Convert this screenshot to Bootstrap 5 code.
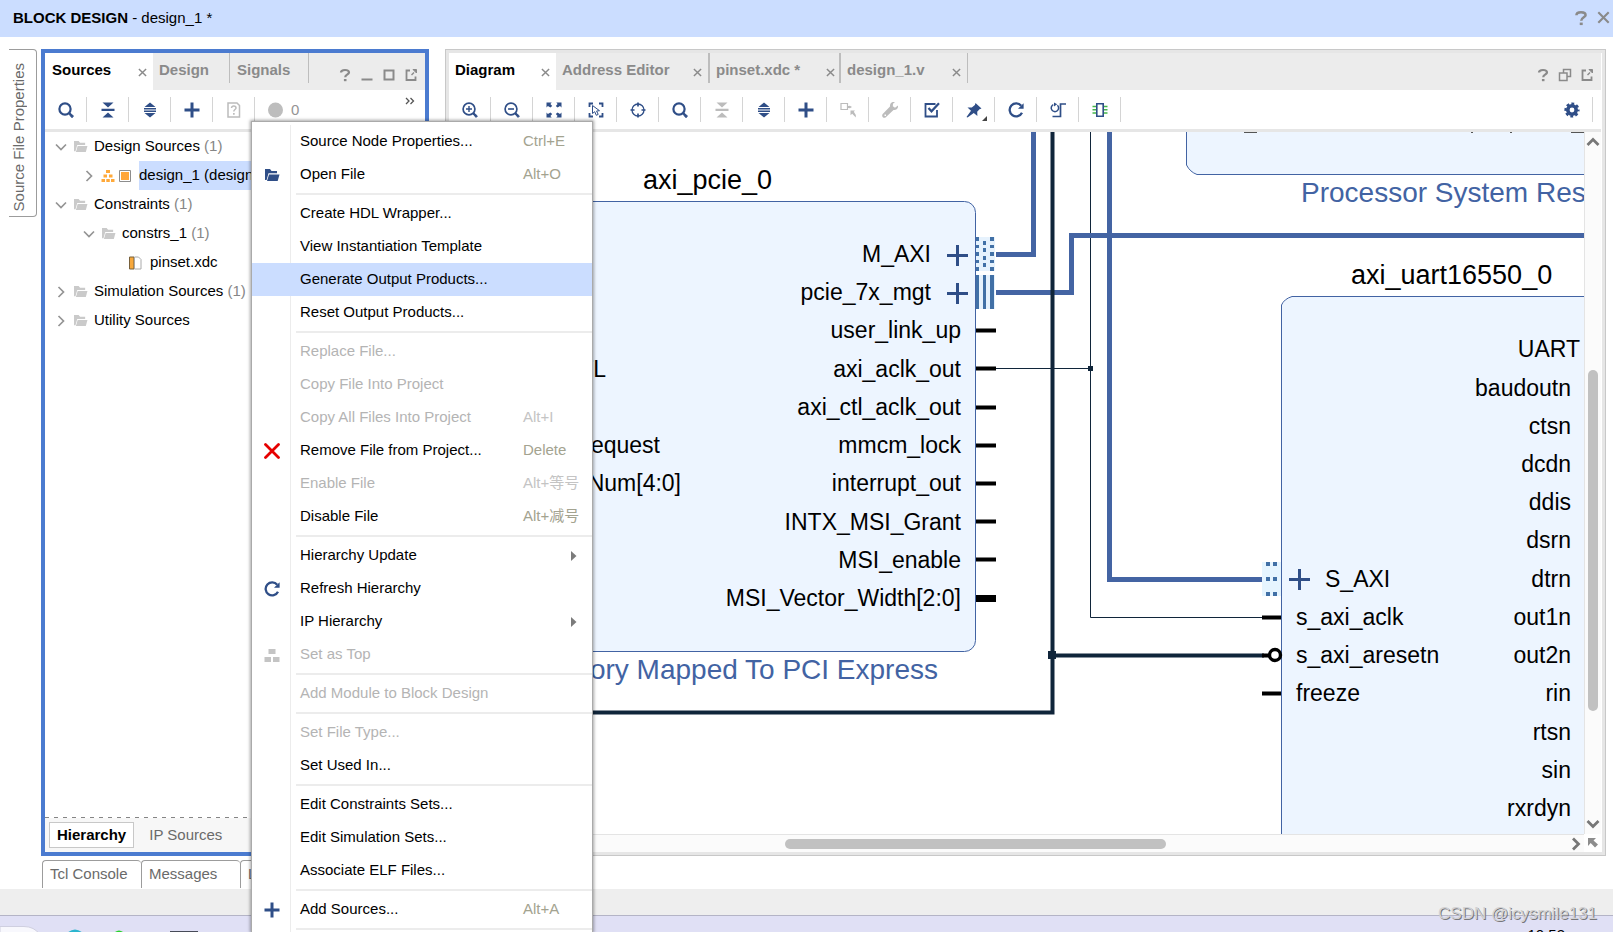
<!DOCTYPE html>
<html lang="en">
<head>
<meta charset="utf-8">
<meta name="viewport" content="width=device-width, initial-scale=1">
<title>Block Design - design_1</title>
<link rel="stylesheet" href="https://cdn.jsdelivr.net/npm/bootstrap@5.3.0/dist/css/bootstrap.min.css">
<script src="https://cdn.jsdelivr.net/npm/bootstrap@5.3.0/dist/js/bootstrap.bundle.min.js"></script>
<style>
:root { --navy:#2f4e87; --sel:#cbddff; --grey:#8a8a8a; --bar:#ececec; --ring:#e6e6e6; }
body { font:15px/20px "Liberation Sans", Arial, "Noto Sans CJK SC", sans-serif; color:#000; background:#fff; height:100vh; overflow:hidden; }
button { font:inherit; background:none; border:0; padding:0; color:inherit; }
svg { display:block; }
.title-strip { background:var(--sel); height:37px; padding:0 3px 2px 13px; color:#000; }
.title-strip button, .pane-ctl button { color:var(--grey); }
.workspace { padding:12px 7px 0 9px; min-height:0; }
.side-tab { width:28px; height:168px; margin-right:4px; border:1px solid #9c9c9c; border-left:0; border-radius:0 4px 4px 0; color:#6a6a6a; padding:8px 8px 0 0; }
.side-tab span { writing-mode:vertical-rl; transform:rotate(180deg); }
.pane-sources { flex:0 0 388px; border:4px solid #4b7bd0; margin-right:16px; }
.pane-diagram { border:1px solid #c8c8c8; min-width:0; }
.pane-ring { border:3px solid var(--ring); padding-right:1px; min-width:0; }
.tab-strip { background:var(--bar); height:37px; font-weight:bold; color:var(--grey); }
.doc-tab { height:30px; padding:0 6px; display:flex; align-items:center; border-right:1px solid #bdbdbd; }
.doc-tab.wide { border-right-width:2px; padding-right:4px; }
.doc-tab > button:first-child { padding-top:3px; font-weight:bold; }
.doc-tab.active { height:37px; background:#fff; color:#000; border:0; padding-bottom:7px; }
.doc-tab .shut { color:var(--grey); padding-top:8px; margin-left:auto; }
.w-src { width:108px; padding-left:7px; } .w-des { width:77px; } .w-sig { width:79px; padding-left:7px; }
.w-dia { width:107px; } .doc-tab.w-adr { width:154px; padding-right:6px; } .w-pin { width:131px; } .w-ver { width:127px; }
.pane-ctl { gap:8px; padding:7px 7px 0 0; }
.tool-strip { height:42px; border-bottom:3px solid var(--ring); padding:7px 0 7px 0; color:var(--navy); }
.tool { width:42px; height:25px; border-right:1px solid #d4d4d4; display:flex; align-items:center; justify-content:center; position:relative; }
.tool.off, .off { color:#bcbcbc; }
.msg-count { padding-left:13px; gap:7px; }
.msg-count span { color:#949494; }
.overflow-mark { padding:0 10px 18px 0; }
.tree-list { min-height:0; }
.tree-row { height:29px; gap:6px; white-space:nowrap; }
.tree-row > span { padding-bottom:2px; }
.tree-row .cnt { color:#868686; }
.lv0 { padding-left:10px; } .lv1 { padding-left:38px; } .lv2 { padding-left:84px; }
.tree-pic { color:#cacaca; }
.lv2 .tree-pic { margin-right:2px; }
.hier-pic { margin-right:-2px; }
.tree-row .picked { background:var(--sel); height:29px; line-height:27px; flex:1; margin-left:2px; }
.view-tabs { background:#f7f7f7; height:34px; padding:4px; }
.view-tabs button { color:#6a6a6a; padding:0 15px; height:26px; }
.view-tabs button.active { background:#fff; border:1px solid #c8c8c8; color:#000; font-weight:bold; padding:0 7px; }
.console-tabs { padding:4px 0 0 42px; height:33px; }
.console-tabs button { width:99px; height:28px; border:1px solid #9c9c9c; border-bottom:0; border-right-width:0; border-radius:4px 4px 0 0; text-align:left; padding:0 7px 2px; color:#6a6a6a; }
.status-strip { background:#eee; height:27px; border-bottom:1px solid #b4b4c6; }
.task-strip { background:#e0e0f5; height:16px; overflow:hidden; }
.task-strip span { padding:9px 48px 0 0; }
.canvas { min-width:0; min-height:0; overflow:hidden; position:relative; }
.canvas svg { position:absolute; inset:0; width:100%; height:100%; }
.canvas text { font-family:"Liberation Sans", Arial, sans-serif; }
.port { font-size:23px; } .block-name { font-size:27px; } .kind { font-size:28px; fill:#4263a3; }
.block { fill:#edf5ff; stroke:#4263a3; }
.bus { fill:none; stroke:#4464a3; stroke-width:5; }
.rst { fill:none; stroke:#10253a; stroke-width:4; }
.clk { fill:none; stroke:#10253a; stroke-width:1; }
.stub { fill:none; stroke:#000; stroke-width:4; }
.vbar { width:17px; background:#fbfbfb; border-left:1px solid #e4e4e4; color:#777; }
.hbar { height:18px; background:#fbfbfb; border-top:1px solid #e4e4e4; color:#777; padding-right:3px; }
.thumb { background:#c1c1c1; border-radius:5px; }
.vbar .thumb { width:10px; flex:341 0 0; } .hbar .thumb { height:10px; flex:380 0 0; }
.v-before { flex:222 0 0; } .v-after { flex:107 0 0; } .h-before { flex:335 0 0; } .h-after { flex:404 0 0; }
.ctx { position:absolute; left:251px; top:121px; bottom:0; width:342px; background:#fff; border:1px solid #aaa; border-bottom:0; padding-top:3px; overflow:hidden; z-index:5; box-shadow:0 0 3px 1px rgba(0,0,0,.35); }
.ctx-rail { position:absolute; left:38px; top:3px; bottom:0; width:1px; background:#ececec; }
.ctx-item { position:relative; display:flex; align-items:center; width:100%; height:33px; text-align:left; }
.ctx-item .pic { width:40px; padding-left:12px; color:var(--navy); flex:none; }
.ctx-item .cap { width:223px; padding:0 0 2px 8px; white-space:nowrap; }
.ctx-item .keys { color:#a3a390; padding:0 0 2px 8px; white-space:nowrap; }
.ctx-item.hot { background:var(--sel); }
.ctx-item:disabled .cap { color:#b4b4b4; } .ctx-item:disabled .keys, .ctx-item:disabled .pic { color:#c4c4c4; }
.ctx-item .more { margin-left:auto; margin-right:15px; }
.ctx hr { margin:2px 0 2px 44px; height:2px; border:0; background:#ececec; opacity:1; }
.watermark { position:absolute; right:16px; bottom:8px; font-size:17px; line-height:20px; color:#d2d2d4; text-shadow:1px 1px 0 #77777c; z-index:4; }
</style>
</head>
<body class="d-flex flex-column position-relative">

<svg width="0" height="0" class="position-absolute" aria-hidden="true">
  <defs>
    <symbol id="i-search" viewBox="0 0 16 16"><circle cx="7" cy="7" r="5.6" fill="none" stroke="currentColor" stroke-width="2.2"/><path d="M10.5 11.5l1-1 4 3.6-1.6 1.6z" fill="currentColor" stroke="currentColor"/></symbol>
    <symbol id="i-zin" viewBox="0 0 16 16"><circle cx="7" cy="7" r="5.9" fill="none" stroke="currentColor" stroke-width="1.7"/><path d="M11 12l1-1 3.4 3-1.4 1.4z" fill="currentColor" stroke="currentColor"/><path d="M4 7h6M7 4v6" stroke="currentColor" stroke-width="1.4"/></symbol>
    <symbol id="i-zout" viewBox="0 0 16 16"><circle cx="7" cy="7" r="5.9" fill="none" stroke="currentColor" stroke-width="1.7"/><path d="M11 12l1-1 3.4 3-1.4 1.4z" fill="currentColor" stroke="currentColor"/><path d="M4 7h6" stroke="currentColor" stroke-width="1.6"/></symbol>
    <symbol id="i-fit" viewBox="0 0 16 16"><path d="M.5.5h5.200L4.400 1.900 6.200 4 4.400 5.600 1.900 4 .5 5.500zM15.500.5v5L14 4l-2.400 1.600L9.800 4l1.800-2.100L10.300.5zM.5 15.500v-5L1.900 12l2.500-1.600L6.200 12l-1.800 2.100 1.300 1.400zM15.500 15.500h-5.200l1.300-1.400L9.800 12l1.800-1.600L14 12l1.500-1.500z" fill="currentColor"/></symbol>
    <symbol id="i-sel" viewBox="0 0 16 16"><path d="M1.500 5V1.500H5M11 1.500h3.500V5M14.500 11v3.500H11M5 14.500H1.500V11" fill="none" stroke="currentColor" stroke-width="1.800"/><path d="M4.500 3.500v8l2.200-1.800 1.600 3.600 1.900-.9-1.600-3.400 2.900-.3z" fill="none" stroke="currentColor"/></symbol>
    <symbol id="i-target" viewBox="0 0 16 16"><circle cx="8" cy="8" r="6" fill="none" stroke="currentColor" stroke-width="1.3"/><path d="M8 .5v4M8 11.500v4M.5 8h4M11.500 8h4" stroke="currentColor" stroke-width="1.7"/></symbol>
    <symbol id="i-collapse" viewBox="0 0 16 16"><path d="M2.500 .5h11L8 5.500zM2.500 15.500h11L8 10.500zM1.500 6.800h13v2.200h-13z" fill="currentColor"/></symbol>
    <symbol id="i-expand" viewBox="0 0 16 16"><path d="M8 .5l5.500 4.500h-11zM8 15.500l5.500-4.500h-11zM2 6h12v1.500H2zM2 8.500h12v1.500H2z" fill="currentColor"/></symbol>
    <symbol id="i-plus" viewBox="0 0 16 16"><path d="M6.500 0.500h3v6h6v3h-6v6h-3v-6h-6v-3h6z" fill="currentColor"/></symbol>
    <symbol id="i-ask" viewBox="0 0 16 16"><path d="M2 1h9l2.500 2.500V15H2z" fill="none" stroke="currentColor" stroke-width="1.500"/><path d="M5.500 6c.2-1.600 1-2 2.300-2s2.200.7 2.200 1.900C10 7.500 7.800 7.600 7.800 9.500" fill="none" stroke="currentColor" stroke-width="1.500"/><path d="M7 11h1.700v1.700H7z" fill="currentColor"/></symbol>
    <symbol id="i-ext" viewBox="0 0 16 16"><path d="M1 1.500h6.500v6H1z" fill="none" stroke="currentColor" stroke-width="1.200"/><path d="M7.500 4h3v2h-3zM9.500 3.500l2.500 1.500-2.500 1.500zM10.500 8.500H15l-1.200 1.300 2 3.200v2.500l-3.600-3.800-1.700 1.600z" fill="currentColor"/></symbol>
    <symbol id="i-wrench" viewBox="0 0 16 16"><path d="M16 3.500l-3 2.300-2.200-1.500.2-2.600L13 0c-2.600-.7-5.400 1-5 4.600L.7 12c-1.700 2 1 5 3.100 3.200L11.500 8c2.700.5 5-1.600 4.500-4.500zM2.500 12.500h1.500v1.500H2.500z" fill="currentColor" fill-rule="evenodd"/></symbol>
    <symbol id="i-check" viewBox="0 0 16 16"><path d="M11.500 2H1.500v12.500H13V8" fill="none" stroke="currentColor" stroke-width="1.800"/><path d="M4.500 6l3 3.200L15 1.300" fill="none" stroke="currentColor" stroke-width="2.300"/></symbol>
    <symbol id="i-pin" viewBox="0 0 16 16"><path d="M9.500 1L15.500 6.600 13.500 7.200l-2.300 2.500.2 4.300L7.800 11 1.500 15.500.5 15 5 8.700 1.500 5.600l4.300-.2L8.900 3z" fill="currentColor"/></symbol>
    <symbol id="i-refresh" viewBox="0 0 16 16"><path d="M13.200 3.800A6.500 6.500 0 1 0 14 10.800" fill="none" stroke="currentColor" stroke-width="2.300"/><path d="M15.600 1.200v5.600H10z" fill="currentColor"/></symbol>
    <symbol id="i-regen" viewBox="0 0 16 16"><path d="M3.300 2.600A3.700 3.700 0 1 0 7.400 3.200" fill="none" stroke="currentColor" stroke-width="1.500"/><path d="M4 0.500V4.500L7.200 2.300z" fill="currentColor"/><path d="M2.500 14.500h8v-12.500H16" fill="none" stroke="currentColor" stroke-width="1.700"/></symbol>
    <symbol id="i-chip" viewBox="0 0 16 16"><path d="M.5 4.500h4M.5 7.800h4M.5 11h4M11.500 4.500h4M11.500 7.800h4M11.500 11h4" stroke="#43b649" stroke-width="1.500"/><path d="M4.800 1.800h6.400v12.400H4.800z" fill="#fff" stroke="currentColor" stroke-width="1.600"/></symbol>
    <symbol id="i-gear" viewBox="0 0 16 16"><circle cx="8" cy="8" r="4.200" fill="none" stroke="currentColor" stroke-width="3.600"/><circle cx="8" cy="8" r="6.400" fill="none" stroke="currentColor" stroke-width="2.400" stroke-dasharray="2.800 2.227" stroke-dashoffset="1.400"/></symbol>
    <symbol id="i-folder" viewBox="0 0 16 14"><path d="M1 12V1h5l1.500 2H13v2.300H4.500L2.600 12z" fill="currentColor"/><path d="M5 6.500h10.500L13.700 13H3z" fill="currentColor"/></symbol>
    <symbol id="i-down" viewBox="0 0 12 12"><path d="M1 3.500l5 5 5-5" fill="none" stroke="#949494" stroke-width="1.700"/></symbol>
    <symbol id="i-right" viewBox="0 0 12 12"><path d="M3.500 1l5 5-5 5" fill="none" stroke="#949494" stroke-width="1.700"/></symbol>
    <symbol id="i-x" viewBox="0 0 10 10"><path d="M1 1l8 8M9 1l-8 8" fill="none" stroke="currentColor" stroke-width="1.600"/></symbol>
    <symbol id="i-help" viewBox="0 0 14 14"><path d="M3 4.600C3 2.600 4.600 2 7 2s4 .7 4 2.500S7.200 6.500 7.200 9.300" fill="none" stroke="currentColor" stroke-width="2.200"/><path d="M5.900 11h2.600v2.200H5.900z" fill="currentColor"/></symbol>
    <symbol id="i-min" viewBox="0 0 14 14"><path d="M1.500 11.500h11" stroke="currentColor" stroke-width="2"/></symbol>
    <symbol id="i-max" viewBox="0 0 14 14"><path d="M2.500 2.500h9v9h-9z" fill="none" stroke="currentColor" stroke-width="2"/></symbol>
    <symbol id="i-rest" viewBox="0 0 14 14"><path d="M5.500 4.500v-3h7v7h-3M1.500 5h7.500v7.500H1.500z" fill="none" stroke="currentColor" stroke-width="1.500"/></symbol>
    <symbol id="i-pop" viewBox="0 0 14 14"><path d="M6 2.500H2.500v9.500h9V8.500" fill="none" stroke="currentColor" stroke-width="1.800"/><path d="M9 1.500h3.500v3.500z" fill="currentColor" stroke="currentColor"/><path d="M7.500 7l2.500-2.500" stroke="currentColor" stroke-width="1.500"/></symbol>
    <symbol id="i-del" viewBox="0 0 16 16"><path d="M1.500 1.500l13 13M14.500 1.500l-13 13" stroke="#e60000" stroke-width="2.800" stroke-linecap="round"/></symbol>
    <symbol id="i-top" viewBox="0 0 16 16"><path d="M4.500 2h7v5h-7zM.5 10h6.500v5H.5zM9 10h6.500v5H9z" fill="currentColor"/></symbol>
    <symbol id="i-hier" viewBox="0 0 14 14"><path d="M5 1h4v3H5zM2.500 5.500H6v3H2.500zM8 5.500h3.500v3H8zM.5 10h3.500v3H.5zM5.300 10h3.500v3H5.300zM10 10h3.500v3H10z" fill="#ffa93a"/></symbol>
    <symbol id="i-sub" viewBox="0 0 6 10"><path d="M0 0l5.500 5L0 10z" fill="#7b7b7b"/></symbol>
  </defs>
</svg>

<header class="title-strip d-flex align-items-center">
  <div><strong>BLOCK DESIGN</strong> - design_1 *</div>
  <div class="ms-auto d-flex gap-2 align-items-center">
    <button aria-label="Help"><svg width="16" height="16"><use href="#i-help"/></svg></button>
    <button aria-label="Close"><svg width="13" height="13"><use href="#i-x"/></svg></button>
  </div>
</header>

<main class="workspace d-flex flex-grow-1">
  <button class="side-tab d-flex align-items-center justify-content-center"><span>Source File Properties</span></button>

  <section class="pane-sources d-flex flex-column">
    <div class="tab-strip d-flex">
      <div class="doc-tab active w-src"><button>Sources</button><button class="shut" aria-label="Close Sources"><svg width="9" height="9"><use href="#i-x"/></svg></button></div>
      <div class="doc-tab w-des"><button>Design</button></div>
      <div class="doc-tab w-sig"><button>Signals</button></div>
      <div class="pane-ctl d-flex align-items-center ms-auto">
        <button aria-label="Help"><svg width="14" height="14"><use href="#i-help"/></svg></button>
        <button aria-label="Minimize"><svg width="14" height="14"><use href="#i-min"/></svg></button>
        <button aria-label="Maximize"><svg width="14" height="14"><use href="#i-max"/></svg></button>
        <button aria-label="Float"><svg width="14" height="14"><use href="#i-pop"/></svg></button>
      </div>
    </div>
    <div class="tool-strip d-flex">
      <button class="tool" aria-label="Search"><svg width="16" height="16"><use href="#i-search"/></svg></button>
      <button class="tool" aria-label="Collapse All"><svg width="16" height="16"><use href="#i-collapse"/></svg></button>
      <button class="tool" aria-label="Expand All"><svg width="16" height="16"><use href="#i-expand"/></svg></button>
      <button class="tool" aria-label="Add Sources"><svg width="16" height="16"><use href="#i-plus"/></svg></button>
      <button class="tool off" aria-label="Missing Sources"><svg width="16" height="16"><use href="#i-ask"/></svg></button>
      <div class="msg-count d-flex align-items-center"><svg width="16" height="16" viewBox="0 0 16 16"><circle cx="7.500" cy="8" r="7.500" fill="#bdbdbd"/></svg><span>0</span></div>
      <button class="overflow-mark ms-auto" aria-label="More"><svg width="10" height="8" viewBox="0 0 10 8"><path d="M1 1l3 3-3 3M5.500 1l3 3-3 3" fill="none" stroke="#555" stroke-width="1.300"/></svg></button>
    </div>
    <ul class="tree-list list-unstyled m-0 flex-grow-1 overflow-hidden">
      <li class="tree-row d-flex align-items-center lv0"><svg width="12" height="12"><use href="#i-down"/></svg><svg class="tree-pic" width="15" height="13"><use href="#i-folder"/></svg><span>Design Sources <span class="cnt">(1)</span></span></li>
      <li class="tree-row d-flex align-items-center lv1"><svg width="12" height="12"><use href="#i-right"/></svg><svg class="hier-pic" width="14" height="14"><use href="#i-hier"/></svg><svg width="12" height="12" viewBox="0 0 12 12"><path d="M.5.5h11v11H.5z" fill="#fff" stroke="#8d8d8d"/><path d="M2 2h8v8H2z" fill="#ffa63a"/></svg><span class="picked">design_1 (design_1.bd)</span></li>
      <li class="tree-row d-flex align-items-center lv0"><svg width="12" height="12"><use href="#i-down"/></svg><svg class="tree-pic" width="15" height="13"><use href="#i-folder"/></svg><span>Constraints <span class="cnt">(1)</span></span></li>
      <li class="tree-row d-flex align-items-center lv1"><svg width="12" height="12"><use href="#i-down"/></svg><svg class="tree-pic" width="15" height="13"><use href="#i-folder"/></svg><span>constrs_1 <span class="cnt">(1)</span></span></li>
      <li class="tree-row d-flex align-items-center lv2"><svg class="tree-pic" width="13" height="14" viewBox="0 0 13 14"><path d="M.5 1H5v12H.5z" fill="#f7a83c" stroke="#77603b"/><path d="M5.500 1h4l2.500 2.500V13H5.500z" fill="#fff" stroke="#aaa"/></svg><span>pinset.xdc</span></li>
      <li class="tree-row d-flex align-items-center lv0"><svg width="12" height="12"><use href="#i-right"/></svg><svg class="tree-pic" width="15" height="13"><use href="#i-folder"/></svg><span>Simulation Sources <span class="cnt">(1)</span></span></li>
      <li class="tree-row d-flex align-items-center lv0"><svg width="12" height="12"><use href="#i-right"/></svg><svg class="tree-pic" width="15" height="13"><use href="#i-folder"/></svg><span>Utility Sources</span></li>
    </ul>
    <svg width="100%" height="1"><path d="M0 .5h400" stroke="#858585" stroke-dasharray="4 5"/></svg>
    <div class="view-tabs d-flex"><button class="active">Hierarchy</button><button>IP Sources</button></div>
  </section>

  <section class="pane-diagram flex-grow-1 d-flex">
   <div class="pane-ring d-flex flex-column flex-grow-1">
    <div class="tab-strip d-flex">
      <div class="doc-tab active w-dia"><button>Diagram</button><button class="shut" aria-label="Close Diagram"><svg width="9" height="9"><use href="#i-x"/></svg></button></div>
      <div class="doc-tab wide w-adr"><button>Address Editor</button><button class="shut" aria-label="Close Address Editor"><svg width="9" height="9"><use href="#i-x"/></svg></button></div>
      <div class="doc-tab wide w-pin"><button>pinset.xdc *</button><button class="shut" aria-label="Close pinset.xdc"><svg width="9" height="9"><use href="#i-x"/></svg></button></div>
      <div class="doc-tab w-ver"><button>design_1.v</button><button class="shut" aria-label="Close design_1.v"><svg width="9" height="9"><use href="#i-x"/></svg></button></div>
      <div class="pane-ctl d-flex align-items-center ms-auto">
        <button aria-label="Help"><svg width="14" height="14"><use href="#i-help"/></svg></button>
        <button aria-label="Restore"><svg width="14" height="14"><use href="#i-rest"/></svg></button>
        <button aria-label="Float"><svg width="14" height="14"><use href="#i-pop"/></svg></button>
      </div>
    </div>
    <div class="tool-strip d-flex">
      <button class="tool" aria-label="Zoom In"><svg width="16" height="16"><use href="#i-zin"/></svg></button>
      <button class="tool" aria-label="Zoom Out"><svg width="16" height="16"><use href="#i-zout"/></svg></button>
      <button class="tool" aria-label="Zoom Fit"><svg width="16" height="16"><use href="#i-fit"/></svg></button>
      <button class="tool" aria-label="Select Area"><svg width="16" height="16"><use href="#i-sel"/></svg></button>
      <button class="tool" aria-label="Auto Fit Selection"><svg width="16" height="16"><use href="#i-target"/></svg></button>
      <button class="tool" aria-label="Search"><svg width="16" height="16"><use href="#i-search"/></svg></button>
      <button class="tool off" aria-label="Collapse All"><svg width="16" height="16"><use href="#i-collapse"/></svg></button>
      <button class="tool" aria-label="Expand All"><svg width="16" height="16"><use href="#i-expand"/></svg></button>
      <button class="tool" aria-label="Add IP"><svg width="16" height="16"><use href="#i-plus"/></svg></button>
      <button class="tool off" aria-label="Make External"><svg width="16" height="16"><use href="#i-ext"/></svg></button>
      <button class="tool off" aria-label="Customize Block"><svg width="16" height="16"><use href="#i-wrench"/></svg></button>
      <button class="tool" aria-label="Validate Design"><svg width="16" height="16"><use href="#i-check"/></svg></button>
      <button class="tool" aria-label="Pin"><svg width="16" height="16"><use href="#i-pin"/></svg><svg class="position-absolute bottom-0 end-0 me-1" width="9" height="6" viewBox="0 0 9 6"><path d="M6 0v5H1z" fill="#444"/></svg></button>
      <button class="tool" aria-label="Refresh"><svg width="16" height="16"><use href="#i-refresh"/></svg></button>
      <button class="tool" aria-label="Regenerate Layout"><svg width="16" height="16"><use href="#i-regen"/></svg></button>
      <button class="tool" aria-label="Optimize Routing"><svg width="16" height="16"><use href="#i-chip"/></svg></button>
      <button class="tool ms-auto me-2" aria-label="Settings"><svg width="16" height="16"><use href="#i-gear"/></svg></button>
    </div>
    <div class="d-flex flex-grow-1">
      <div class="canvas flex-grow-1">
        <svg role="img" aria-label="Block diagram">
          <g transform="translate(-449 -132)">
            <rect class="block" x="460.500" y="201.500" width="515" height="450" rx="11"/>
            <path class="block" d="M1186.500 120V165Q1190 172 1197 174.500H1620V120z"/>
            <path class="block" d="M1281.500 860V305Q1284 299 1292 296.500H1620V860z"/>
            <path d="M1244 132.500h13M1471 132.500h2M1510 132.500h2M1571 132.500h13" stroke="#555"/>
            <path class="clk" d="M996 368.500H1090.500M1090.500 120V617.500H1262"/>
            <path class="bus" d="M996 254.500H1033.500V120M996 292.500H1071.500V235.500H1620M1109.500 120V579.500H1262"/>
            <path class="rst" d="M1052.500 120V712.500H480M1052.500 655.500H1264"/>
            <path d="M1088 366h5v5h-5zM1048 651h8v8h-8z" fill="#10253a"/>
            <path class="stub" d="M976 330.500h20M976 368.500h20M976 407.500h20M976 445.500h20M976 483.500h20M976 521.500h20M976 559.500h20M1262 617.500h19M1262 655.500h8M1262 693.500h19"/>
            <path d="M976 598.500h20" stroke="#000" stroke-width="7"/>
            <circle cx="1275" cy="655" r="5.500" fill="#fff" stroke="#000" stroke-width="3.400"/>
            <rect x="976" y="237" width="19" height="34" fill="#e6f2fd"/><rect x="976" y="275" width="19" height="34" fill="#e6f2fd"/><rect x="1262" y="562" width="19" height="34" fill="#e6f5ff"/>
            <path d="M976 237h3v4h-3zm0 8h3v3h-3zm0 7h3v4h-3zm0 8h3v3h-3zm0 7h3v4h-3zM983 241h3v4h-3zm0 7h3v4h-3zm0 8h3v4h-3zm0 7h3v4h-3zM990 237h4v4h-4zm0 8h4v3h-4zm0 7h4v4h-4zm0 8h4v3h-4zm0 7h4v4h-4zM976 275h3v34h-3zM983 275h3v34h-3zM990 275h4v34h-4zM1266 562h4v4h-4zm7 0h4v4h-4zm-7 15h4v4h-4zm7 0h4v4h-4zm-7 15h4v4h-4zm7 0h4v4h-4z" fill="#4170a6"/>
            <path d="M947 255.500h21M957.500 245v21M947 293.500h21M957.500 283v21M1289 579.500h21M1299.500 569v21" stroke="#2f4e87" stroke-width="3"/>
            <text class="block-name" x="643" y="189">axi_pcie_0</text>
            <text class="block-name" x="1351" y="284">axi_uart16550_0</text>
            <text class="kind" x="1301" y="202">Processor System Reset</text>
            <text class="kind" x="938" y="679" text-anchor="end">AXI Memory Mapped To PCI Express</text>
            <g class="port" text-anchor="end">
              <text x="931" y="262">M_AXI</text><text x="931" y="300">pcie_7x_mgt</text>
              <text x="961" y="338">user_link_up</text><text x="961" y="377">axi_aclk_out</text><text x="961" y="415">axi_ctl_aclk_out</text>
              <text x="961" y="453">mmcm_lock</text><text x="961" y="491">interrupt_out</text><text x="961" y="530">INTX_MSI_Grant</text>
              <text x="961" y="568">MSI_enable</text><text x="961" y="606">MSI_Vector_Width[2:0]</text>
              <text x="606" y="377">S_AXI_CTL</text><text x="660" y="453">INTX_MSI_Request</text><text x="681" y="491">MSI_Vector_Num[4:0]</text>
              <text x="1580" y="357">UART</text><text x="1571" y="396">baudoutn</text><text x="1571" y="434">ctsn</text><text x="1571" y="472">dcdn</text>
              <text x="1571" y="510">ddis</text><text x="1571" y="548">dsrn</text><text x="1571" y="587">dtrn</text><text x="1571" y="625">out1n</text>
              <text x="1571" y="663">out2n</text><text x="1571" y="701">rin</text><text x="1571" y="740">rtsn</text><text x="1571" y="778">sin</text><text x="1571" y="816">rxrdyn</text>
            </g>
            <g class="port">
              <text x="1325" y="587">S_AXI</text><text x="1296" y="625">s_axi_aclk</text><text x="1296" y="663">s_axi_aresetn</text><text x="1296" y="701">freeze</text>
            </g>
          </g>
        </svg>
      </div>
      <div class="vbar d-flex flex-column align-items-center pt-1 pb-1">
        <svg width="14" height="12" viewBox="0 0 14 12"><path d="M1.500 9L7 3.500 12.500 9" fill="none" stroke="currentColor" stroke-width="2.800"/></svg>
        <div class="v-before"></div><div class="thumb"></div><div class="v-after"></div>
        <svg width="14" height="12" viewBox="0 0 14 12"><path d="M1.500 3L7 8.500 12.500 3" fill="none" stroke="currentColor" stroke-width="2.800"/></svg>
      </div>
    </div>
    <div class="d-flex">
      <div class="hbar d-flex align-items-center flex-grow-1">
        <div class="h-before"></div><div class="thumb"></div><div class="h-after"></div>
        <svg width="10" height="14" viewBox="0 0 10 14"><path d="M2 1.500L7.500 7 2 12.500" fill="none" stroke="currentColor" stroke-width="2.800"/></svg>
      </div>
      <svg width="17" height="17" viewBox="0 0 17 17"><path d="M4 4h8l-2.500 2.500 4.500 4-3 3-4.300-4.500L4 12z" fill="#8d8d8d"/></svg>
    </div>
   </div>
  </section>
</main>

<nav class="console-tabs d-flex" aria-label="Console"><button>Tcl Console</button><button>Messages</button><button>Log</button></nav>
<div class="status-strip"></div>
<footer class="task-strip d-flex align-items-start">
  <svg width="210" height="16" viewBox="0 0 210 16"><path d="M0 10.500h24q10 0 16 8H0z" fill="#f8f8fd" stroke="#cfcfe0"/><path d="M66 18q9-9 18 0z" fill="#2cb5cf"/><path d="M115 16q4-3 8 0z" fill="#27d32c"/><path d="M170 15h28v2h-28z" fill="#474b58"/></svg>
  <span class="ms-auto">10:53</span>
</footer>

<div class="watermark">CSDN @icysmile131</div>

<div class="ctx" role="menu">
  <div class="ctx-rail"></div>
  <button class="ctx-item" role="menuitem"><span class="pic"></span><span class="cap">Source Node Properties...</span><span class="keys">Ctrl+E</span></button>
  <button class="ctx-item" role="menuitem"><span class="pic"><svg width="16" height="14"><use href="#i-folder"/></svg></span><span class="cap">Open File</span><span class="keys">Alt+O</span></button>
  <hr>
  <button class="ctx-item" role="menuitem"><span class="pic"></span><span class="cap">Create HDL Wrapper...</span></button>
  <button class="ctx-item" role="menuitem"><span class="pic"></span><span class="cap">View Instantiation Template</span></button>
  <button class="ctx-item hot" role="menuitem"><span class="pic"></span><span class="cap">Generate Output Products...</span></button>
  <button class="ctx-item" role="menuitem"><span class="pic"></span><span class="cap">Reset Output Products...</span></button>
  <hr>
  <button class="ctx-item" role="menuitem" disabled><span class="pic"></span><span class="cap">Replace File...</span></button>
  <button class="ctx-item" role="menuitem" disabled><span class="pic"></span><span class="cap">Copy File Into Project</span></button>
  <button class="ctx-item" role="menuitem" disabled><span class="pic"></span><span class="cap">Copy All Files Into Project</span><span class="keys">Alt+I</span></button>
  <button class="ctx-item" role="menuitem"><span class="pic"><svg width="16" height="16"><use href="#i-del"/></svg></span><span class="cap">Remove File from Project...</span><span class="keys">Delete</span></button>
  <button class="ctx-item" role="menuitem" disabled><span class="pic"></span><span class="cap">Enable File</span><span class="keys">Alt+等号</span></button>
  <button class="ctx-item" role="menuitem"><span class="pic"></span><span class="cap">Disable File</span><span class="keys">Alt+减号</span></button>
  <hr>
  <button class="ctx-item" role="menuitem"><span class="pic"></span><span class="cap">Hierarchy Update</span><svg class="more" width="6" height="10"><use href="#i-sub"/></svg></button>
  <button class="ctx-item" role="menuitem"><span class="pic"><svg width="16" height="16"><use href="#i-refresh"/></svg></span><span class="cap">Refresh Hierarchy</span></button>
  <button class="ctx-item" role="menuitem"><span class="pic"></span><span class="cap">IP Hierarchy</span><svg class="more" width="6" height="10"><use href="#i-sub"/></svg></button>
  <button class="ctx-item" role="menuitem" disabled><span class="pic"><svg width="16" height="16"><use href="#i-top"/></svg></span><span class="cap">Set as Top</span></button>
  <hr>
  <button class="ctx-item" role="menuitem" disabled><span class="pic"></span><span class="cap">Add Module to Block Design</span></button>
  <hr>
  <button class="ctx-item" role="menuitem" disabled><span class="pic"></span><span class="cap">Set File Type...</span></button>
  <button class="ctx-item" role="menuitem"><span class="pic"></span><span class="cap">Set Used In...</span></button>
  <hr>
  <button class="ctx-item" role="menuitem"><span class="pic"></span><span class="cap">Edit Constraints Sets...</span></button>
  <button class="ctx-item" role="menuitem"><span class="pic"></span><span class="cap">Edit Simulation Sets...</span></button>
  <button class="ctx-item" role="menuitem"><span class="pic"></span><span class="cap">Associate ELF Files...</span></button>
  <hr>
  <button class="ctx-item" role="menuitem"><span class="pic"><svg width="16" height="16"><use href="#i-plus"/></svg></span><span class="cap">Add Sources...</span><span class="keys">Alt+A</span></button>
  <hr>
</div>
</body>
</html>
